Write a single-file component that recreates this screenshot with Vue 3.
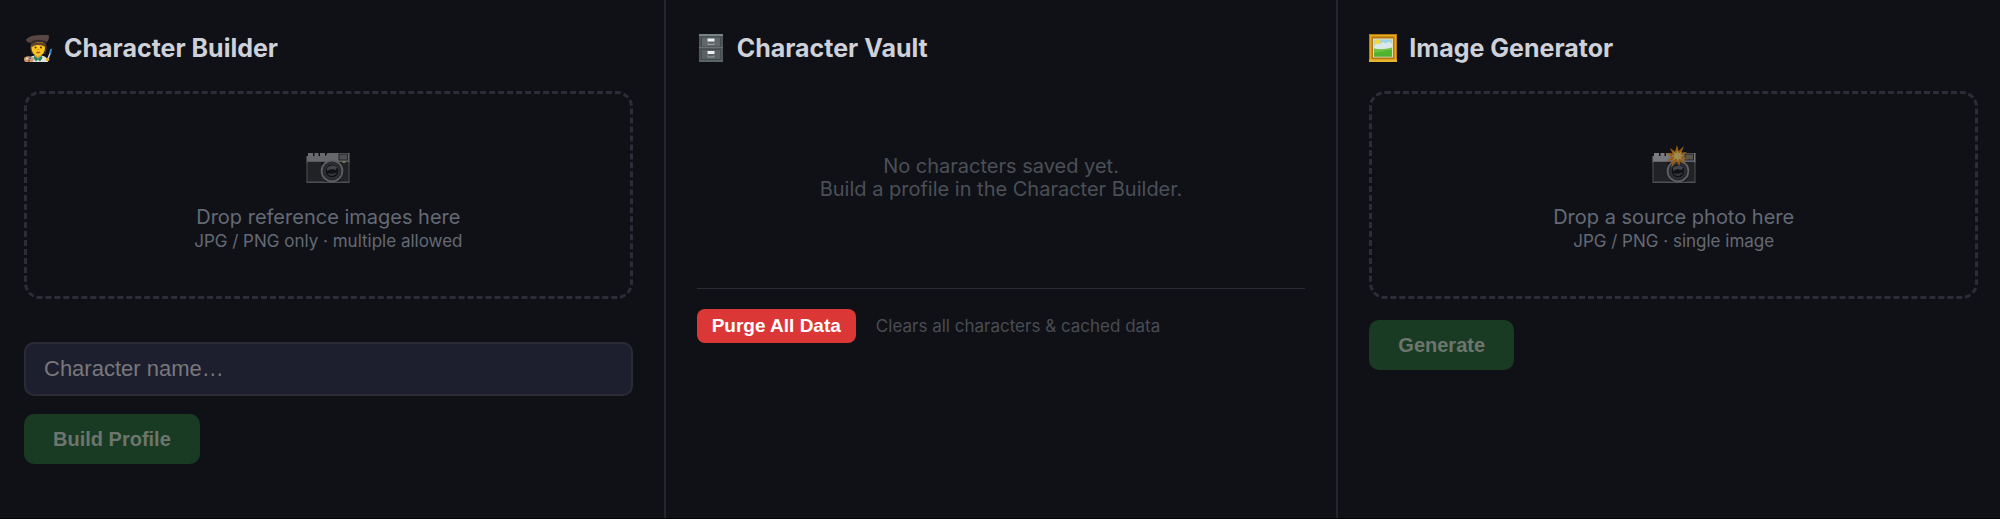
<script setup>
import { ref } from 'vue'

const characterName = ref('')
</script>

<template>
  <main class="app">
    <section class="panel">
      <h2 class="title">
        <svg class="title-icon" viewBox="0 0 28 28" aria-hidden="true">
          <path d="M7 9h15l1 5-1.500 6H7.500L6 14z" fill="#3f2c20" />
          <path d="M11 18h6v6h-6z" fill="#dda313" />
          <path d="M4 28c.3-4 2.500-6 7-6.500l3 3 3-3c4.500.5 6.700 2.500 7 6.500z" fill="#dfe5e2" />
          <path d="M10.500 21.500l3.500 3 3.500-3 1 2.500-2.500 3.500-2-2-2 2L9.500 24z" fill="#2d8060" />
          <ellipse cx="14.200" cy="14" rx="6.800" ry="8" fill="#fbc520" />
          <path d="M7 10c4-2 11-2 15 0l-.6 3c-3-2.500-10-3-13.600 0z" fill="#60422c" />
          <path d="M2 6C4 1.500 12 .6 24.500 1c1.200 2 .5 5-2 7.500C16 6.500 11 6.800 7 9 4 8.500 2.400 7.500 2 6z" fill="#594541" />
          <path d="M7 7.500c4-1.800 10-2 15.500 0l-.5 2c-5-1.800-10-1.600-14.500.3z" fill="#372a2a" />
          <circle cx="11.500" cy="13.500" r="1" fill="#513613" />
          <circle cx="17" cy="13.500" r="1" fill="#513613" />
          <path d="M13.300 15.500h1.800" stroke="#d99317" stroke-width="1" />
          <path d="M12 18.200c1.500-.5 3-.5 4.500 0-.7 1.400-3.700 1.400-4.500 0z" fill="#a5512b" />
          <path d="M0 25c0-2.500 4-3.500 8-2 2.500 1 2 3 .5 5H1.500C.5 27.500 0 26.500 0 25z" fill="#c99a6a" />
          <circle cx="3" cy="24.500" r="1" fill="#f5e6cf" />
          <circle cx="6" cy="24.300" r="1" fill="#5b66b9" />
          <circle cx="5" cy="26.700" r="1" fill="#a94444" />
          <path d="M23.500 26l2.700-7" stroke="#d5d8da" stroke-width="1.500" />
          <path d="M25 19.500l1.200-4.500 1.800-.5-.8 5.500z" fill="#3686c9" />
          <circle cx="23.500" cy="25.500" r="1.800" fill="#efb41d" />
        </svg>
        <span>Character Builder</span>
      </h2>
      <div class="dropzone" role="button" tabindex="0">
        <svg class="drop-icon" viewBox="0 0 52 52" aria-hidden="true">
          <path d="M6 15h5v3H6zM12.500 15h4v3h-4zM18 15h5v3h-5z" fill="#a8a9ab" />
          <path d="M4.500 18h19l2-3h22v10h-43z" fill="#a1a2a5" />
          <rect x="4.500" y="23.500" width="43" height="21.500" fill="#777a7d" />
          <rect x="5.500" y="24" width="41" height="19.500" fill="#2c2e30" />
          <path d="M19 24h19l4 10-4 9.500H23z" fill="#151618" />
          <rect x="37" y="16" width="8.500" height="6" fill="#777" stroke="#303236" />
          <rect x="40.500" y="23" width="3" height="2" fill="#c6bc68" />
          <circle cx="30" cy="33" r="11.300" fill="#93959a" />
          <circle cx="30" cy="33" r="9.500" fill="#35383d" />
          <circle cx="30" cy="33" r="7" fill="#101217" stroke="#50535a" />
          <path d="M25 30c2-3 7-3.500 10-1l-1 3c-3-1-6-1-9 1z" fill="#62666d" />
          <path d="M25 35c3 1 7 1 10-1-1 4-7 6-10 1z" fill="#4b4f56" />
        </svg>
        <p class="drop-text">Drop reference images here</p>
        <p class="drop-hint">JPG / PNG only · multiple allowed</p>
      </div>
      <input v-model="characterName" class="name-input" type="text" aria-label="Character name" placeholder="Character name…" />
      <button class="action" type="button" disabled>Build Profile</button>
    </section>

    <section class="panel">
      <h2 class="title">
        <svg class="title-icon" viewBox="0 0 28 28" aria-hidden="true">
          <rect x="2" width="24" height="28" fill="#50575a" />
          <path d="M2 0h24v2H2z" fill="#7a8285" />
          <rect x="4.500" y="3" width="19" height="10" fill="#5f676a" stroke="#454c4f" />
          <rect x="4.500" y="15.500" width="19" height="10" fill="#596164" stroke="#454c4f" />
          <path d="M2 13.500h24M2 27h24" stroke="#697174" />
          <path d="M10.500 4.500h7v3h-7zM10.500 17h7v3h-7z" fill="#eef1f2" />
          <path d="M11 9v1.500h6V9M11 21.500V23h6v-1.500" fill="none" stroke="#9aa1a3" />
        </svg>
        <span>Character Vault</span>
      </h2>
      <p class="empty">No characters saved yet.<br />Build a profile in the Character Builder.</p>
      <footer class="purge-row">
        <button class="purge" type="button">Purge All Data</button>
        <span class="purge-note">Clears all characters &amp; cached data</span>
      </footer>
    </section>

    <section class="panel">
      <h2 class="title">
        <svg class="title-icon" viewBox="0 0 28 28" aria-hidden="true">
          <rect width="28" height="28" fill="#b97b0c" />
          <path d="M1 1h26v26H1z" fill="#e6aa20" />
          <path d="M2.500 2.500h23v23h-23z" fill="#b5770d" />
          <path d="M0 25.500h28V28H0z" fill="#e5b52c" />
          <rect x="4" y="4.500" width="20" height="19" fill="#e7dfb6" />
          <rect x="5" y="5.500" width="18" height="17" fill="#9ed3e6" />
          <circle cx="8.500" cy="8.500" r="3" fill="#f8d734" />
          <path d="M5 13c1-4 5-4 6-2 1-4 6-3 6-1 2-3 5-2 6 0v6H5z" fill="#dbe8ea" />
          <path d="M5 14.500c6 1 11 1 18-1v9H5z" fill="#72bf42" />
          <path d="M5 19c6-1 12-3 18-3v6.500H5z" fill="#50b431" />
        </svg>
        <span>Image Generator</span>
      </h2>
      <div class="dropzone" role="button" tabindex="0">
        <svg class="drop-icon" viewBox="0 0 52 52" aria-hidden="true">
          <path d="M6 15h5v3H6zM12.500 15h4v3h-4zM18 15h5v3h-5z" fill="#c4c5c7" />
          <path d="M4.500 18h19l2-3h22v10h-43z" fill="#bdbec1" />
          <rect x="4.500" y="23.500" width="43" height="21.500" fill="#777a7d" />
          <rect x="5.500" y="24" width="41" height="19.500" fill="#2c2e30" />
          <path d="M19 24h19l4 10-4 9.500H23z" fill="#151618" />
          <rect x="37" y="16" width="8.500" height="6" fill="#8a8571" stroke="#303236" />
          <circle cx="30" cy="33" r="11.300" fill="#93959a" />
          <circle cx="30" cy="33" r="9.500" fill="#35383d" />
          <circle cx="30" cy="33" r="7" fill="#101217" stroke="#50535a" />
          <path d="M25 30c2-3 7-3.500 10-1l-1 3c-3-1-6-1-9 1z" fill="#62666d" />
          <path d="M25 35c3 1 7 1 10-1-1 4-7 6-10 1z" fill="#4b4f56" />
          <path d="M29 7l1.600 6 5.400-5-2.500 6.500 5.500-.5-4.500 3.500 5 4-5.500-.5 2.500 5.500-4.500-3-.5 4.500-3-4.500-5.500 6 2-7.500-6.500 1.500 5-4.500-6-4 7 .5-2.500-5.500 5 3.500z" fill="#f09018" />
          <path d="M29 12l1.500 3.500 3-2-1 3 3 1-3 1.500 1.500 3-3-1.500-1 3-1.500-3-4 2 2-3.500-3-1 3-1-1-3 3 1.500z" fill="#ffe07a" />
        </svg>
        <p class="drop-text">Drop a source photo here</p>
        <p class="drop-hint">JPG / PNG · single image</p>
      </div>
      <button class="action action-near" type="button" disabled>Generate</button>
    </section>
  </main>
</template>

<style>
body {
  margin: 0;
  background: #101116;
}
</style>

<style scoped>
.app {
  display: flex;
  box-sizing: border-box;
  min-height: 100vh;
  padding: 0 22px 0 24px;
  border-bottom: 1px solid #050508;
  background: #101116;
  font-family: Inter, "Liberation Sans", sans-serif;
}
.panel {
  flex: 1 1 0;
  min-width: 0;
  padding-top: 32px;
}
.panel + .panel {
  margin-left: 31px;
  padding-left: 31px;
  border-left: 2px solid #25262d;
}
.title {
  display: flex;
  align-items: center;
  gap: 12px;
  margin: 0 0 27px;
  color: #ced1d9;
  font-size: 25px;
  font-weight: 700;
  line-height: 32px;
}
.title-icon {
  flex: none;
  width: 28px;
  height: 28px;
}
.dropzone {
  display: flex;
  flex-direction: column;
  align-items: center;
  padding: 44px 20px 43px;
  border: 3px dashed #2d2d39;
  border-radius: 16px;
  text-align: center;
}
.drop-icon {
  width: 52px;
  height: 52px;
  margin-bottom: 15px;
  opacity: 0.6;
}
.drop-text,
.drop-hint {
  margin: 0;
  color: #646a75;
}
.drop-text {
  font-size: 20px;
  line-height: 24px;
}
.drop-hint {
  font-size: 17px;
  line-height: 24px;
}
.name-input {
  display: block;
  box-sizing: border-box;
  width: 100%;
  height: 54px;
  margin: 43px 0 18px;
  padding: 0 18px;
  border: 2px solid #2a2b35;
  border-radius: 10px;
  background: #1e1f2e;
  color: #ced1d9;
  font-family: "Liberation Sans", Arial, sans-serif;
  font-size: 22px;
}
.name-input::placeholder {
  color: #78787c;
  opacity: 1;
}
.action {
  display: block;
  height: 50px;
  padding: 0 29px;
  border: 0;
  border-radius: 10px;
  background: #1a3b23;
  color: #6c756e;
  font-family: "Liberation Sans", Arial, sans-serif;
  font-size: 20px;
  font-weight: 700;
}
.action-near {
  margin-top: 21px;
}
.empty {
  margin: 0;
  padding: 64px 0 87px;
  color: #4b4f57;
  font-size: 20px;
  line-height: 23px;
  text-align: center;
}
.purge-row {
  display: flex;
  align-items: center;
  gap: 20px;
  padding-top: 20px;
  border-top: 1px solid #2b2c33;
}
.purge {
  height: 34px;
  padding: 0 15px;
  border: 0;
  border-radius: 8px;
  background: #db3736;
  color: #ffffff;
  font-family: "Liberation Sans", Arial, sans-serif;
  font-size: 19px;
  font-weight: 700;
}
.purge-note {
  color: #484c54;
  font-size: 17px;
}
</style>
